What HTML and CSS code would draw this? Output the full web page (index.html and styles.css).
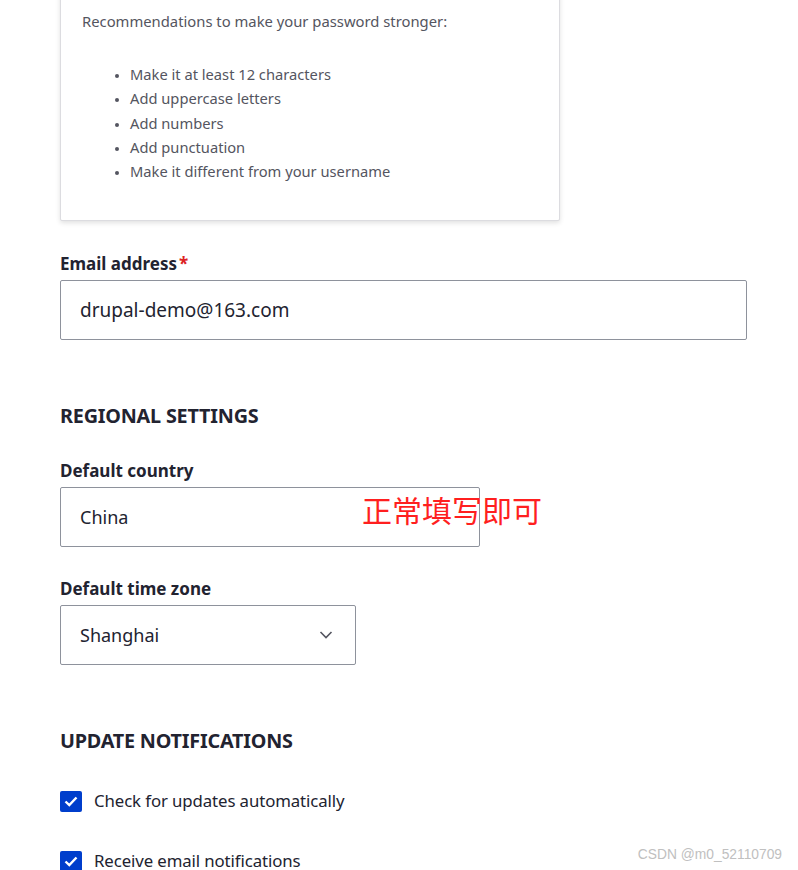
FILE: index.html
```html
<!DOCTYPE html>
<html lang="en">
<head>
<meta charset="utf-8">
<title>Account settings</title>
<link rel="stylesheet" href="styles.css">
</head>
<body>
<div class="page">
  <div class="card">
    <p class="card-intro">Recommendations to make your password stronger:</p>
    <ul class="tips">
      <li>Make it at least 12 characters</li>
      <li>Add uppercase letters</li>
      <li>Add numbers</li>
      <li>Add punctuation</li>
      <li>Make it different from your username</li>
    </ul>
  </div>

  <div class="field field-email">
    <label class="label">Email address<span class="req">*</span></label>
    <div class="input input-wide">drupal-demo@163.com</div>
  </div>

  <h2 class="section-title">Regional settings</h2>

  <div class="field field-country">
    <label class="label">Default country</label>
    <div class="input input-mid">China</div>
    <span class="note">正常填写即可</span>
  </div>

  <div class="field field-tz">
    <label class="label">Default time zone</label>
    <div class="input input-narrow select">
      <span>Shanghai</span>
      <svg class="chev" width="14" height="8" viewBox="0 0 14 8"><path d="M1.5 1l5.5 5.5 5.5-5.5" fill="none" stroke="#545560" stroke-width="1.6"/></svg>
    </div>
  </div>

  <h2 class="section-title section-updates">Update notifications</h2>

  <div class="check-row">
    <span class="checkbox"><svg width="14" height="11" viewBox="0 0 14 11"><path d="M1.5 5.5l3.8 3.6L12.5 1.5" fill="none" stroke="#fff" stroke-width="2.4"/></svg></span>
    <span class="check-label">Check for updates automatically</span>
  </div>
  <div class="check-row check-row-2">
    <span class="checkbox"><svg width="14" height="11" viewBox="0 0 14 11"><path d="M1.5 5.5l3.8 3.6L12.5 1.5" fill="none" stroke="#fff" stroke-width="2.4"/></svg></span>
    <span class="check-label">Receive email notifications</span>
  </div>

  <div class="watermark">CSDN @m0_52110709</div>
</div>
</body>
</html>
```

FILE: styles.css
```css
html, body {
  margin: 0;
  padding: 0;
  background: #fff;
}
body {
  font-family: "Noto Sans", "Open Sans", "Liberation Sans", "Noto Sans CJK SC", sans-serif;
  color: #222330;
  overflow: hidden;
  height: 870px;
}
.page {
  position: relative;
  display: flow-root;
  padding-left: 60px;
  height: 870px;
}
.card {
  width: 456px;
  margin-top: -20px;
  padding: 30px 21px 37px 21px;
  border: 1px solid #dcdce0;
  border-radius: 2px;
  box-shadow: 0 2px 5px rgba(0, 0, 0, 0.12);
  background: #fff;
}
.card-intro {
  margin: 0;
  font-size: 14.8px;
  line-height: 20px;
  color: #545560;
}
.tips {
  margin: 31px 0 0 0;
  padding-left: 48px;
  font-size: 14.7px;
  line-height: 24.3px;
  color: #545560;
}
.tips li::marker {
  font-size: 12px;
}
.field {
  position: relative;
}
.field-email {
  margin-top: 33px;
}
.label {
  display: block;
  font-size: 17px;
  line-height: 20px;
  font-weight: 700;
  color: #222330;
  margin-bottom: 6px;
}
.req {
  color: #dc2323;
  margin-left: 2px;
}
.input {
  box-sizing: border-box;
  height: 60px;
  border: 1px solid #8e929c;
  border-radius: 2px;
  padding: 0 19px;
  display: flex;
  align-items: center;
  font-size: 18px;
  color: #222330;
}
.input-wide {
  width: 687px;
  font-size: 19px;
}
.input-mid { width: 420px; }
.input-narrow { width: 296px; }
.select {
  justify-content: space-between;
  padding-right: 22px;
}
.chev {
  display: block;
}
.section-title {
  margin: 64px 0 0 0;
  font-size: 19.8px;
  line-height: 24px;
  font-weight: 700;
  text-transform: uppercase;
  letter-spacing: -0.2px;
  color: #222330;
}
.field-country {
  margin-top: 33px;
}
.field-tz {
  margin-top: 32px;
}
.note {
  position: absolute;
  left: 302px;
  top: 30px;
  font-family: "Noto Sans CJK SC", sans-serif;
  font-size: 30px;
  line-height: 36px;
  color: #ff1f1f;
  letter-spacing: 0;
}
.check-row {
  display: flex;
  align-items: center;
  gap: 12px;
  margin-top: 37px;
  height: 22px;
}
.check-row-2 {
  margin-top: 38px;
}
.checkbox {
  box-sizing: border-box;
  width: 22px;
  height: 21px;
  border-radius: 2px;
  background: #003ecc;
  display: flex;
  align-items: center;
  justify-content: center;
}
.checkbox svg { display: block; }
.check-label {
  font-size: 16.8px;
  line-height: 22px;
  color: #222330;
  letter-spacing: -0.1px;
}
.watermark {
  position: absolute;
  right: 16px;
  top: 847px;
  font-family: "Liberation Sans", sans-serif;
  font-size: 13.8px;
  color: #c0c0c0;
}
```
